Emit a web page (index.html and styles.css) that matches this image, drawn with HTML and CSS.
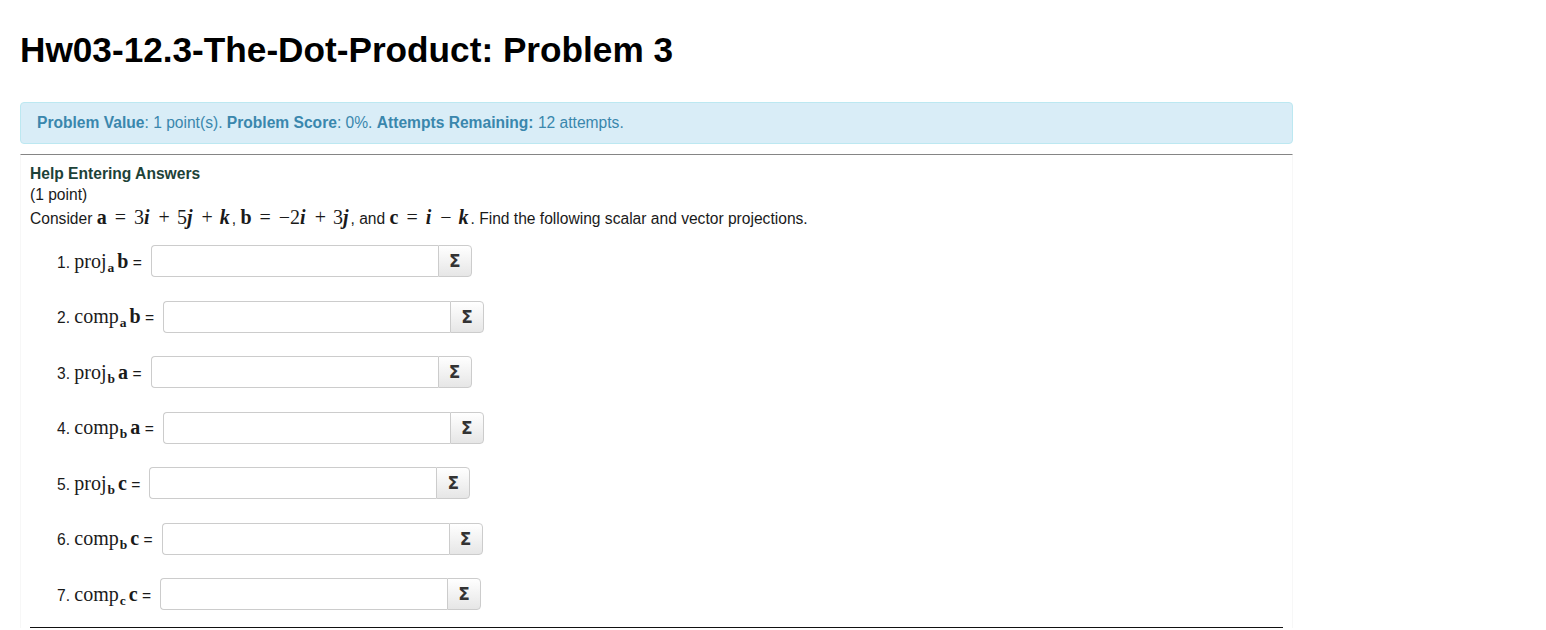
FILE: index.html
```html
<!DOCTYPE html>
<html>
<head>
<meta charset="utf-8">
<link rel="stylesheet" href="styles.css">
</head>
<body>
<div class="page">
  <h1 class="title">Hw03-12.3-The-Dot-Product: Problem 3</h1>
  <div class="alert">
    <b>Problem Value</b>: 1 point(s). <b>Problem Score</b>: 0%. <b>Attempts Remaining:</b> 12 attempts.
  </div>
  <div class="problem">
    <div class="help">Help Entering Answers</div>
    <div class="line">(1 point)</div>
    <div class="line">Consider <span class="m"><b>a</b><span class="rel">=</span>3<i>i</i><span class="op">+</span>5<i>j</i><span class="op">+</span><i>k</i></span>, <span class="m"><b>b</b><span class="rel">=</span>−2<i>i</i><span class="op">+</span>3<i>j</i></span>, and <span class="m"><b>c</b><span class="rel">=</span><i>i</i><span class="op">−</span><i>k</i></span>. Find the following scalar and vector projections.</div>
    <div class="rows">
      <div class="row"><span class="lbl">1. <span class="m">proj<sub>a</sub><b>b</b></span> =</span><span class="field"><span class="input"></span><span class="btn">Σ</span></span></div>
      <div class="row"><span class="lbl">2. <span class="m">comp<sub>a</sub><b>b</b></span> =</span><span class="field"><span class="input"></span><span class="btn">Σ</span></span></div>
      <div class="row"><span class="lbl">3. <span class="m">proj<sub>b</sub><b>a</b></span> =</span><span class="field"><span class="input"></span><span class="btn">Σ</span></span></div>
      <div class="row"><span class="lbl">4. <span class="m">comp<sub>b</sub><b>a</b></span> =</span><span class="field"><span class="input"></span><span class="btn">Σ</span></span></div>
      <div class="row"><span class="lbl">5. <span class="m">proj<sub>b</sub><b>c</b></span> =</span><span class="field"><span class="input"></span><span class="btn">Σ</span></span></div>
      <div class="row"><span class="lbl">6. <span class="m">comp<sub>b</sub><b>c</b></span> =</span><span class="field"><span class="input"></span><span class="btn">Σ</span></span></div>
      <div class="row"><span class="lbl">7. <span class="m">comp<sub>c</sub><b>c</b></span> =</span><span class="field"><span class="input"></span><span class="btn">Σ</span></span></div>
    </div>
    <div class="endline"></div>
  </div>
</div>
</body>
</html>
```

FILE: styles.css
```css
html, body {
  margin: 0;
  padding: 0;
  background: #ffffff;
}
body {
  font-family: "Liberation Sans", Arial, sans-serif;
  font-size: 15.6px;
  color: #1a1a1a;
}
.page {
  width: 1273px;
  padding: 0 0 0 20px;
}
.title {
  margin: 0;
  padding-top: 28px;
  font-size: 35.2px;
  line-height: 44px;
  font-weight: bold;
  color: #000;
}
.alert {
  margin-top: 30px;
  background: #d9edf7;
  border: 1px solid #bce8f1;
  border-radius: 4px;
  padding: 10px 16px;
  line-height: 20px;
  color: #3a87ad;
}
.alert b {
  color: #3a87ad;
}
.problem {
  margin-top: 10px;
  border-top: 1px solid #858585;
  border-left: 1px solid #f7f7f7;
  border-right: 1px solid #f7f7f7;
  padding: 8px 9px 0 9px;
}
.help {
  font-weight: bold;
  color: #1d4238;
  line-height: 21px;
}
.line {
  line-height: 22px;
}
.m {
  font-family: "Liberation Serif", "DejaVu Serif", serif;
  font-size: 20px;
}
.m b {
  font-weight: bold;
}
.m i {
  font-weight: bold;
  font-style: italic;
  padding-right: 2px;
}
.m .op {
  padding: 0 0.35em;
}
.m .rel {
  padding: 0 0.4em;
}
.m sub {
  font-size: 13.5px;
  font-weight: bold;
  vertical-align: -4px;
  line-height: 0;
  margin: 0 3px 0 1px;
}
.rows {
  display: flex;
  flex-direction: column;
  gap: 23.5px;
  margin-top: 15.3px;
  padding-left: 27px;
}
.row {
  display: flex;
  align-items: center;
  height: 32px;
}
.lbl {
  margin-right: 9px;
  white-space: nowrap;
}
.field {
  display: flex;
  height: 32px;
}
.input {
  width: 286px;
  height: 30px;
  border: 1px solid #cccccc;
  border-right: none;
  border-radius: 4px 0 0 4px;
  background: #fff;
}
.btn {
  width: 32px;
  height: 30px;
  border: 1px solid #cccccc;
  border-radius: 0 4px 4px 0;
  background: linear-gradient(#ffffff, #e6e6e6);
  display: flex;
  align-items: center;
  justify-content: center;
  font-family: "DejaVu Sans", sans-serif;
  font-weight: bold;
  font-size: 17px;
  color: #333;
}
.endline {
  margin-top: 16.7px;
  height: 1px;
  background: #111;
}
```
